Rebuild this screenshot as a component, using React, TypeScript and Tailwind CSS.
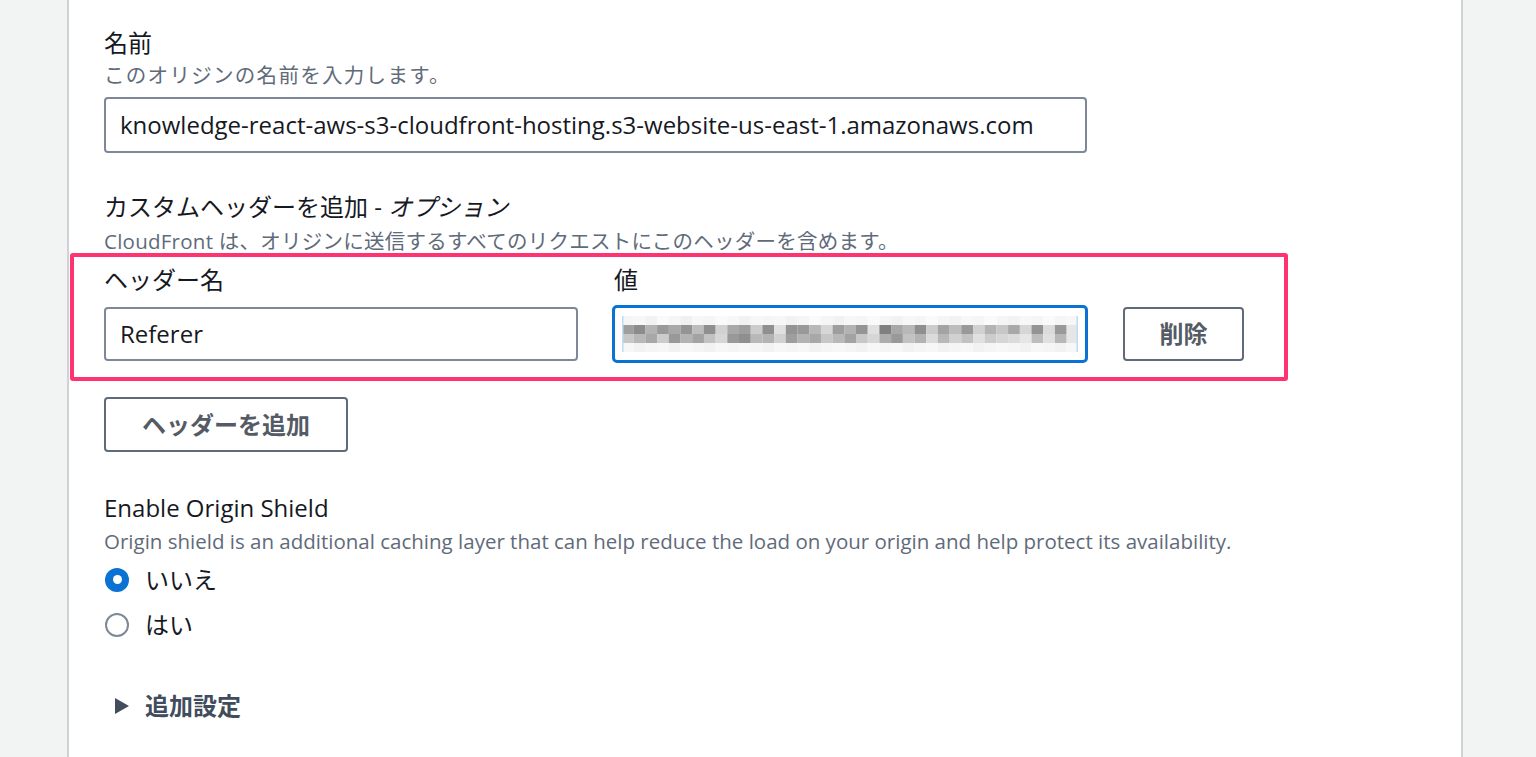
import React from "react";

const blurCols = [
  [0.96, 0.62, 0.78, 0.97], [0.97, 0.55, 0.72, 0.95], [0.95, 0.7, 0.66, 0.96], [0.98, 0.6, 0.8, 0.97],
  [0.96, 0.66, 0.6, 0.95], [0.94, 0.58, 0.7, 0.97], [0.97, 0.74, 0.64, 0.96], [0.96, 0.56, 0.76, 0.95],
  [0.98, 0.82, 0.84, 0.97], [0.97, 0.66, 0.6, 0.96], [0.95, 0.62, 0.56, 0.97], [0.97, 0.8, 0.72, 0.96],
  [0.96, 0.56, 0.7, 0.95], [0.97, 0.88, 0.82, 0.97], [0.95, 0.58, 0.62, 0.96], [0.96, 0.6, 0.7, 0.97],
  [0.98, 0.72, 0.66, 0.95], [0.96, 0.84, 0.78, 0.96], [0.95, 0.62, 0.72, 0.97], [0.97, 0.7, 0.64, 0.96],
  [0.96, 0.58, 0.78, 0.95], [0.98, 0.88, 0.84, 0.97], [0.96, 0.5, 0.68, 0.96], [0.95, 0.66, 0.6, 0.97],
  [0.97, 0.72, 0.76, 0.95], [0.96, 0.56, 0.7, 0.96], [0.98, 0.8, 0.86, 0.97], [0.96, 0.64, 0.72, 0.95],
  [0.95, 0.74, 0.82, 0.96], [0.97, 0.6, 0.76, 0.97], [0.96, 0.82, 0.88, 0.95], [0.98, 0.7, 0.8, 0.96],
  [0.96, 0.78, 0.84, 0.97], [0.95, 0.66, 0.86, 0.96], [0.97, 0.84, 0.9, 0.95], [0.96, 0.58, 0.74, 0.97],
  [0.98, 0.86, 0.88, 0.96], [0.96, 0.6, 0.72, 0.95], [0.97, 0.9, 0.9, 0.97],
];

const gray = (v: number) => {
  const c = Math.round(v * 255);
  return `rgb(${c},${c},${c})`;
};

// pixelated (redacted) header value
const BlurredValue = () => (
  <svg width="456" height="36" viewBox="0 0 456 36" className="block">
    {blurCols.map((col, i) =>
      col.map((v, j) => (
        <rect key={`${i}-${j}`} x={i * 11.7} y={j * 9} width="11.8" height="9" fill={gray(v)} />
      ))
    )}
    <rect x="0" y="0" width="1.5" height="36" fill="#bfdcf5" />
    <rect x="454.5" y="0" width="1.5" height="36" fill="#bfdcf5" />
  </svg>
);

const App = () => {
  return (
    <div
      className="flex h-[757px] w-[1536px] overflow-hidden bg-[#f2f3f3] text-[#16191f]"
      style={{ fontFamily: "'Open Sans', 'Noto Sans CJK JP', sans-serif" }}
    >
      <div className="w-[67px] shrink-0" />

      {/* panel */}
      <div className="w-[1396px] shrink-0 border-x-2 border-[#cfd3d4] bg-white pl-[35px] pt-[27px]">
        <div className="text-[24px] leading-[32px]">名前</div>
        <div className="mt-[2px] text-[20.5px] leading-[28px] tracking-[1.3px] text-[#5f6b7a]">このオリジンの名前を入力します。</div>
        <div className="mt-[8px] flex h-[56px] w-[983px] items-center rounded-[4px] border-2 border-[#7d8998] px-[14px] text-[24px]">
          knowledge-react-aws-s3-cloudfront-hosting.s3-website-us-east-1.amazonaws.com
        </div>

        <div className="mt-[38px] text-[24px] leading-[32px]">
          カスタムヘッダーを追加 - <i>オプション</i>
        </div>
        <div className="mt-[4px] h-[26px] text-[20.5px] leading-[28px] tracking-[0.25px] text-[#5f6b7a]">
          CloudFront は、オリジンに送信するすべてのリクエストにこのヘッダーを含めます。
        </div>

        {/* highlighted header row */}
        <div className="-ml-[34px] h-[128px] w-[1218px] rounded-[3px] border-4 border-[#ff3370] pl-[30px] pt-[7px]">
          <div className="flex">
            <div className="w-[474px]">
              <div className="text-[24px] leading-[32px]">ヘッダー名</div>
              <div className="mt-[11px] flex h-[54px] items-center rounded-[4px] border-2 border-[#7d8998] px-[14px] text-[24px]">
                Referer
              </div>
            </div>
            <div className="ml-[34px] w-[476px]">
              <div className="pl-[2px] text-[24px] leading-[32px]">値</div>
              <div className="mt-[9px] flex h-[58px] items-center rounded-[5px] border-[3px] border-[#0972d3] px-[7px]">
                <BlurredValue />
              </div>
            </div>
            <div className="ml-[35px] pt-[43px]">
              <div className="flex h-[54px] w-[121px] items-center justify-center rounded-[4px] border-2 border-[#5f6b7a] text-[24px] font-bold text-[#545b64]">
                削除
              </div>
            </div>
          </div>
        </div>

        <div className="mt-[16px] flex h-[55px] w-[244px] items-center justify-center rounded-[4px] border-2 border-[#5f6b7a] text-[24px] font-bold text-[#545b64]">
          ヘッダーを追加
        </div>

        <div className="mt-[40px] text-[24px] font-medium leading-[32px]">Enable Origin Shield</div>
        <div className="mt-[3px] text-[20.5px] leading-[28px] text-[#5f6b7a]">
          Origin shield is an additional caching layer that can help reduce the load on your origin and help protect its availability.
        </div>

        <div className="mt-[2px]">
          <div className="flex h-[45px] items-center gap-[16px] pl-[1px]">
            <span className="flex h-[24px] w-[24px] items-center justify-center rounded-full bg-[#0972d3]">
              <span className="h-[9px] w-[9px] rounded-full bg-white" />
            </span>
            <span className="text-[24px]">いいえ</span>
          </div>
          <div className="flex h-[45px] items-center gap-[16px] pl-[1px]">
            <span className="h-[24px] w-[24px] rounded-full border-2 border-[#7d8998]" />
            <span className="text-[24px]">はい</span>
          </div>
        </div>

        <div className="mt-[43px] flex h-[32px] items-center gap-[16px] pl-[11px]">
          <svg width="14" height="16" viewBox="0 0 14 16">
            <path d="M0 0 L14 8 L0 16 Z" fill="#414d5c" />
          </svg>
          <span className="text-[24px] font-bold text-[#414d5c]">追加設定</span>
        </div>
      </div>

      <div className="flex-1" />
    </div>
  );
};

export default App;
